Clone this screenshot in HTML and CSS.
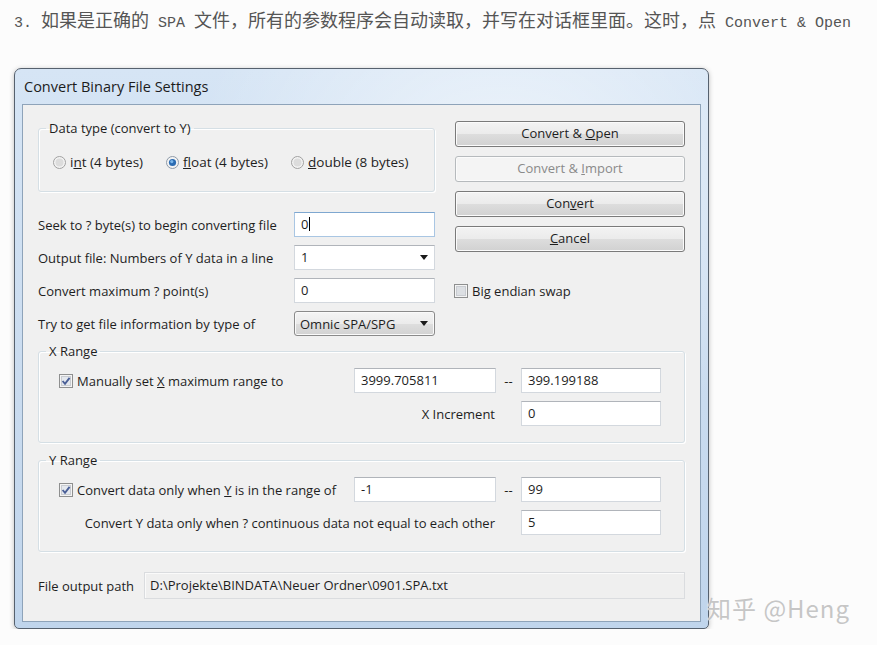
FILE: index.html
```html
<!DOCTYPE html>
<html lang="zh-CN">
<head>
    <meta charset="UTF-8">
    <meta name="viewport" content="width=device-width, initial-scale=1.0">
    <title>Convert Binary File Settings</title>
    <link rel="stylesheet" href="styles.css">
</head>
<body>
    <p class="intro"><span class="mono">3. </span>如果是正确的<span class="mono"> SPA </span>文件，所有的参数程序会自动读取，并写在对话框里面。这时，点<span class="mono"> Convert &amp; Open</span></p>

    <div class="dialog">
        <div class="titlebar">Convert Binary File Settings</div>
        <div class="client">
            <div class="top">
                <div class="left">
                    <fieldset class="group">
                        <legend>Data type (convert to Y)</legend>
                        <div class="radios">
                            <span class="option">
                                <svg class="radio" width="13" height="13" viewBox="0 0 13 13"><circle cx="6.5" cy="6.5" r="6" fill="#f3f3f3" stroke="#a0a0a0"/><circle cx="6.5" cy="6.5" r="4" fill="#dcdcdc"/></svg>
                                <span>i<u>n</u>t (4 bytes)</span>
                            </span>
                            <span class="option">
                                <svg class="radio" width="13" height="13" viewBox="0 0 13 13"><circle cx="6.5" cy="6.5" r="6" fill="#f3f3f3" stroke="#8e9aa8"/><circle cx="6.5" cy="6.5" r="3.6" fill="#2b6cb3"/><circle cx="5.8" cy="5.6" r="1.6" fill="#7ab6ea"/></svg>
                                <span><u>f</u>loat (4 bytes)</span>
                            </span>
                            <span class="option">
                                <svg class="radio" width="13" height="13" viewBox="0 0 13 13"><circle cx="6.5" cy="6.5" r="6" fill="#f3f3f3" stroke="#a0a0a0"/><circle cx="6.5" cy="6.5" r="4" fill="#dcdcdc"/></svg>
                                <span><u>d</u>ouble (8 bytes)</span>
                            </span>
                        </div>
                    </fieldset>

                    <div class="field-row first">
                        <span>Seek to ? byte(s) to begin converting file</span>
                        <div class="input focused">0<span class="caret"></span></div>
                    </div>
                    <div class="field-row">
                        <span>Output file: Numbers of Y data in a line</span>
                        <div class="input combo">1
                            <svg width="8" height="5" viewBox="0 0 8 5"><path d="M0 0 H8 L4 5 Z" fill="#1a1a1a"/></svg>
                        </div>
                    </div>
                    <div class="field-row">
                        <span>Convert maximum ? point(s)</span>
                        <div class="input">0</div>
                    </div>
                    <div class="field-row">
                        <span>Try to get file information by type of</span>
                        <div class="select">Omnic SPA/SPG
                            <svg width="8" height="5" viewBox="0 0 8 5"><path d="M0 0 H8 L4 5 Z" fill="#1a1a1a"/></svg>
                        </div>
                    </div>
                </div>

                <div class="right">
                    <div class="btn">Convert &amp; <u>O</u>pen</div>
                    <div class="btn disabled">Convert &amp; <u>I</u>mport</div>
                    <div class="btn">Con<u>v</u>ert</div>
                    <div class="btn"><u>C</u>ancel</div>
                    <div class="checkline endian">
                        <svg class="checkbox" width="14" height="14" viewBox="0 0 14 14"><rect x="0.5" y="0.5" width="13" height="13" fill="#f4f4f4" stroke="#8e8f8f"/><rect x="2.5" y="2.5" width="9" height="9" fill="#dcdfe3" stroke="#c9ccd1"/></svg>
                        <span>Big endian swap</span>
                    </div>
                </div>
            </div>

            <fieldset class="group xrange">
                <legend>X Range</legend>
                <div class="range">
                    <div class="range-row">
                        <div class="checkline">
                            <svg class="checkbox" width="14" height="14" viewBox="0 0 14 14"><rect x="0.5" y="0.5" width="13" height="13" fill="#f4f4f4" stroke="#8e8f8f"/><rect x="2.5" y="2.5" width="9" height="9" fill="#e4e8ee" stroke="#c9ccd1"/><path d="M3.6 7 L6 9.8 L10.6 3.8" fill="none" stroke="#4a5f97" stroke-width="1.9"/></svg>
                            <span>Manually set <u>X</u> maximum range to</span>
                        </div>
                        <div class="input">3999.705811</div>
                        <span class="dash">--</span>
                        <div class="input">399.199188</div>
                    </div>
                    <div class="range-row">
                        <span class="wide-label">X Increment</span>
                        <div class="input last">0</div>
                    </div>
                </div>
            </fieldset>

            <fieldset class="group yrange">
                <legend>Y Range</legend>
                <div class="range">
                    <div class="range-row">
                        <div class="checkline">
                            <svg class="checkbox" width="14" height="14" viewBox="0 0 14 14"><rect x="0.5" y="0.5" width="13" height="13" fill="#f4f4f4" stroke="#8e8f8f"/><rect x="2.5" y="2.5" width="9" height="9" fill="#e4e8ee" stroke="#c9ccd1"/><path d="M3.6 7 L6 9.8 L10.6 3.8" fill="none" stroke="#4a5f97" stroke-width="1.9"/></svg>
                            <span>Convert data only when <u>Y</u> is in the range of</span>
                        </div>
                        <div class="input">-1</div>
                        <span class="dash">--</span>
                        <div class="input">99</div>
                    </div>
                    <div class="range-row">
                        <span class="wide-label">Convert Y data only when ? continuous data not equal to each other</span>
                        <div class="input last">5</div>
                    </div>
                </div>
            </fieldset>

            <div class="path-row">
                <span>File output path</span>
                <div class="path">D:\Projekte\BINDATA\Neuer Ordner\0901.SPA.txt</div>
            </div>
        </div>
    </div>

    <div class="watermark">知乎 @Heng</div>
</body>
</html>
```

FILE: styles.css
```css
body {
    margin: 0;
    background-color: #fcfcfc;
    font-family: "Open Sans", "Noto Sans", sans-serif;
    font-size: 13px;
    color: #1e1e1e;
}

/* line of text above the screenshot */
.intro {
    margin: 0;
    height: 68px;
    padding: 7px 0 0 14px;
    box-sizing: border-box;
    font-family: "Noto Sans CJK SC", sans-serif;
    font-size: 18px;
    line-height: 24px;
    color: #555;
}

.intro .mono {
    font-family: "Liberation Mono", monospace;
    font-size: 15px;
}

.dialog {
    margin-left: 14px;
    width: 695px;
    box-sizing: border-box;
    padding: 0 7px 6px;
    border: 1px solid #56616e;
    border-radius: 7px 7px 5px 5px;
    background: radial-gradient(ellipse at 70% 20%, rgba(255, 255, 255, 0.6), rgba(255, 255, 255, 0) 45%),
                linear-gradient(#d6e5f5, #c9dbef 60%, #c0d5ec);
    box-shadow: 0 1px 5px rgba(0, 0, 0, 0.25);
}

.titlebar {
    height: 35px;
    line-height: 35px;
    padding-left: 2px;
    font-size: 14.5px;
    color: #1c1c1c;
}

.client {
    border: 1px solid #8ea3b9;
    background-color: #f0f0f0;
    padding: 14px 15px 22px 15px;
}

.top {
    display: flex;
    gap: 20px;
}

.left {
    width: 397px;
}

.right {
    flex: 1;
    padding-top: 2px;
}

/* group boxes */
.group {
    margin: 0;
    padding: 0;
    border: 1px solid #d5dfe5;
    border-radius: 3px;
    box-shadow: inset 1px 1px 0 #fff, 1px 1px 0 #fff;
}

.group legend {
    margin-left: 7px;
    padding: 0 3px;
    line-height: 18px;
}

.radios {
    display: flex;
    gap: 23px;
    height: 22px;
    align-items: center;
    padding: 14px 0 18px 14px;
    font-size: 13.5px;
}

.option {
    display: flex;
    align-items: center;
    gap: 4px;
}

.field-row {
    display: flex;
    align-items: center;
    justify-content: space-between;
    height: 25px;
    margin-top: 8px;
}

.field-row.first {
    margin-top: 20px;
}

.input {
    box-sizing: border-box;
    width: 141px;
    height: 25px;
    padding: 0 6px;
    line-height: 23px;
    border: 1px solid #d3d8de;
    border-top-color: #b0b4ba;
    background-color: #fff;
}

.input.focused {
    border-color: #a9c6e3;
    border-top-color: #7ea7d0;
}

.caret {
    display: inline-block;
    width: 1px;
    height: 14px;
    margin-left: 1px;
    vertical-align: -2px;
    background-color: #000;
}

.combo,
.select {
    display: flex;
    align-items: center;
    justify-content: space-between;
    padding-right: 6px;
}

.select {
    box-sizing: border-box;
    width: 141px;
    height: 25px;
    padding-left: 5px;
    border: 1px solid #8a8a8a;
    border-radius: 3px;
    background: linear-gradient(#f4f4f4, #ebebeb 50%, #dedede 50%, #d2d2d2);
    box-shadow: inset 0 0 0 1px #fafafa;
}

/* push buttons */
.btn {
    height: 26px;
    box-sizing: border-box;
    margin-bottom: 9px;
    border: 1px solid #7a7a7a;
    border-radius: 3px;
    background: linear-gradient(#f3f3f3, #ebebeb 50%, #dddddd 50%, #d1d1d1);
    box-shadow: inset 0 0 0 1px #fbfbfb;
    text-align: center;
    line-height: 23px;
}

.btn.disabled {
    border-color: #b6babd;
    background: #f4f4f4;
    color: #8a8a8a;
}

.checkline {
    display: flex;
    align-items: center;
    gap: 4px;
}

.endian {
    margin-top: 30px;
    margin-left: -1px;
}

/* X / Y range boxes */
.range {
    padding: 8px 23px 16px 20px;
}

.xrange {
    margin-top: 6px;
}

.yrange {
    margin-top: 8px;
}

.range-row {
    display: grid;
    grid-template-columns: 1fr 142px 25px 140px;
    align-items: center;
    height: 25px;
}

.range-row + .range-row {
    margin-top: 8px;
}

.range .input {
    width: auto;
}

.dash {
    text-align: center;
}

.wide-label {
    grid-column: 1 / 3;
    text-align: right;
    padding-right: 1px;
}

.input.last {
    grid-column: 4;
}

.path-row {
    display: flex;
    align-items: center;
    gap: 10px;
    margin-top: 20px;
}

.path {
    flex: 1;
    height: 27px;
    box-sizing: border-box;
    padding-left: 5px;
    line-height: 25px;
    border: 1px solid #dadcdf;
    background-color: #efefef;
    box-shadow: inset 1px 1px 0 #fafafa;
}

.watermark {
    position: absolute;
    left: 707px;
    top: 590px;
    font-family: "Noto Sans CJK SC", sans-serif;
    font-size: 24px;
    letter-spacing: 1px;
    color: #c6c6c6;
    text-shadow: 0 0 2px #fff, 0 0 1px #fff;
}
```
